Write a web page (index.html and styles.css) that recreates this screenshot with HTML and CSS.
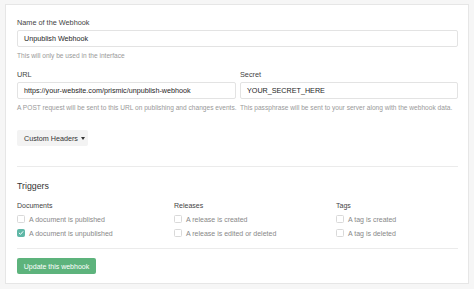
FILE: index.html
```html
<!DOCTYPE html>
<html>
<head>
<meta charset="utf-8">
<link rel="stylesheet" href="styles.css">
</head>
<body>
<div class="card">
  <div class="field">
    <label class="label">Name of the Webhook</label>
    <div class="input">Unpublish Webhook</div>
    <div class="help">This will only be used in the interface</div>
  </div>
  <div class="row">
    <div class="field">
      <label class="label">URL</label>
      <div class="input">https://your-website.com/prismic/unpublish-webhook</div>
      <div class="help">A POST request will be sent to this URL on publishing and changes events.</div>
    </div>
    <div class="field">
      <label class="label">Secret</label>
      <div class="input">YOUR_SECRET_HERE</div>
      <div class="help">This passphrase will be sent to your server along with the webhook data.</div>
    </div>
  </div>
  <div class="headers-wrap">
    <button class="btn-headers">Custom Headers <span class="caret"></span></button>
  </div>
  <hr class="divider">
  <h3 class="triggers-title">Triggers</h3>
  <div class="triggers">
    <div class="group">
      <div class="group-title">Documents</div>
      <div class="check"><span class="box"></span>A document is published</div>
      <div class="check"><span class="box checked"><svg viewBox="0 0 8 8" width="8" height="8"><path d="M1.6 4.2 L3.3 5.8 L6.5 2.2" fill="none" stroke="#fff" stroke-width="1.3" stroke-linecap="round" stroke-linejoin="round"/></svg></span>A document is unpublished</div>
    </div>
    <div class="group">
      <div class="group-title">Releases</div>
      <div class="check"><span class="box"></span>A release is created</div>
      <div class="check"><span class="box"></span>A release is edited or deleted</div>
    </div>
    <div class="group">
      <div class="group-title">Tags</div>
      <div class="check"><span class="box"></span>A tag is created</div>
      <div class="check"><span class="box"></span>A tag is deleted</div>
    </div>
  </div>
  <hr class="divider bottom">
  <button class="btn-submit">Update this webhook</button>
</div>
</body>
</html>
```

FILE: styles.css
```css
html, body {
  margin: 0;
  padding: 0;
}
body {
  background: #f6f6f6;
  font-family: "Liberation Sans", Arial, sans-serif;
  color: #444;
  width: 474px;
  height: 289px;
  overflow: hidden;
}
.card {
  box-sizing: border-box;
  margin: 4px 0 0 5px;
  width: 464px;
  height: 280px;
  background: #fff;
  border: 1px solid #e6e6e6;
  padding: 13px 10px 0 11px;
}
.field {
  display: flex;
  flex-direction: column;
}
.label {
  font-size: 7.3px;
  color: #444;
  line-height: 9px;
  margin-bottom: 3px;
}
.input {
  box-sizing: border-box;
  height: 17px;
  border: 1px solid #e3e3e3;
  border-radius: 2px;
  padding: 0 6px;
  font-size: 7.2px;
  line-height: 15px;
  color: #1e1e1e;
}
.help {
  font-size: 6.6px;
  color: #999;
  line-height: 9px;
  margin-top: 4px;
  white-space: nowrap;
}
.row {
  display: grid;
  grid-template-columns: 219px 218px;
  gap: 4px;
  margin-top: 10px;
}
.headers-wrap {
  margin-top: 18px;
}
.btn-headers {
  box-sizing: border-box;
  height: 16px;
  width: 71px;
  border: none;
  background: #f3f3f3;
  border-radius: 2px;
  font-family: inherit;
  font-size: 7.2px;
  color: #333;
  padding: 0 0 0 7px;
  text-align: left;
  display: flex;
  align-items: center;
  gap: 3px;
}
.caret {
  width: 0;
  height: 0;
  border-left: 2.5px solid transparent;
  border-right: 2.5px solid transparent;
  border-top: 3px solid #333;
}
.divider {
  border: none;
  border-top: 1px solid #ebebeb;
  margin: 20px 0 0 0;
  width: 441px;
}
.triggers-title {
  font-size: 8.8px;
  font-weight: normal;
  color: #333;
  margin: 14px 0 0 0;
  line-height: 11px;
}
.triggers {
  display: grid;
  grid-template-columns: 157px 162px 1fr;
  margin-top: 9px;
}
.group-title {
  font-size: 7px;
  line-height: 9px;
  color: #444;
  margin-bottom: 5px;
}
.check {
  display: flex;
  align-items: center;
  gap: 4px;
  font-size: 7px;
  color: #888;
  height: 8px;
  margin-bottom: 6px;
}
.box {
  box-sizing: border-box;
  width: 8px;
  height: 8px;
  border: 1px solid #d9d9d9;
  border-radius: 1.5px;
  display: flex;
  align-items: center;
  justify-content: center;
}
.box.checked {
  background: #5fb7a6;
  border-color: #5fb7a6;
}
.box svg {
  display: block;
}
.divider.bottom {
  margin-top: 5px;
}
.btn-submit {
  margin-top: 9px;
  box-sizing: border-box;
  width: 79px;
  height: 16px;
  border: none;
  border-radius: 2px;
  background: #5db37c;
  color: #fff;
  font-family: inherit;
  font-size: 7px;
  padding: 0;
  display: block;
}
```
